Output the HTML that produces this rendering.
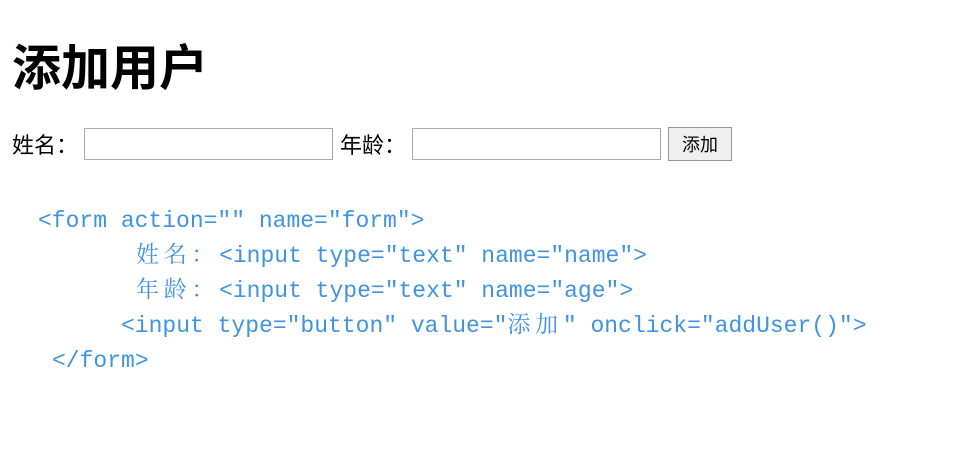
<!DOCTYPE html>
<html><head><meta charset="utf-8"><style>
body{margin:0;background:#fff;font-family:"Liberation Sans","Noto Sans CJK SC",sans-serif;}
h1{position:absolute;left:12px;top:35px;margin:0;font-size:49px;font-weight:bold;line-height:60px;font-family:"Noto Sans CJK SC",sans-serif;}
.lbl{position:absolute;top:128px;font-size:22px;line-height:32px;font-family:"Noto Sans CJK SC",sans-serif;}
.inp{position:absolute;top:128px;height:32px;border:1px solid #a9a9a9;box-sizing:border-box;background:#fff;}
.btn{position:absolute;left:668px;top:127px;width:64px;height:34px;box-sizing:border-box;border:1px solid #999;background:#efefef;font-size:18px;line-height:32px;text-align:center;font-family:"Noto Sans CJK SC",sans-serif;}
.c{position:absolute;font-family:"Liberation Mono","Noto Serif CJK SC",monospace;font-size:23px;color:#3f93e0;white-space:pre;line-height:30px;}
.z{display:inline-block;width:27.7px;}
</style></head><body>
<h1>添加用户</h1>
<div class="lbl" style="left:12px">姓名：</div>
<div class="inp" style="left:84px;width:249px"></div>
<div class="lbl" style="left:340px">年龄：</div>
<div class="inp" style="left:412px;width:249px"></div>
<div class="btn">添加</div>
<div class="c" style="left:38px;top:206px">&lt;form action="" name="form"&gt;</div>
<div class="c" style="left:136px;top:241px"><span class="z">姓</span><span class="z">名</span><span class="z">：</span>&lt;input type="text" name="name"&gt;</div>
<div class="c" style="left:136px;top:276px"><span class="z">年</span><span class="z">龄</span><span class="z">：</span>&lt;input type="text" name="age"&gt;</div>
<div class="c" style="left:121px;top:311px">&lt;input type="button" value="<span class="z">添</span><span class="z">加</span>" onclick="addUser()"&gt;</div>
<div class="c" style="left:52px;top:346px">&lt;/form&gt;</div>
</body></html>
